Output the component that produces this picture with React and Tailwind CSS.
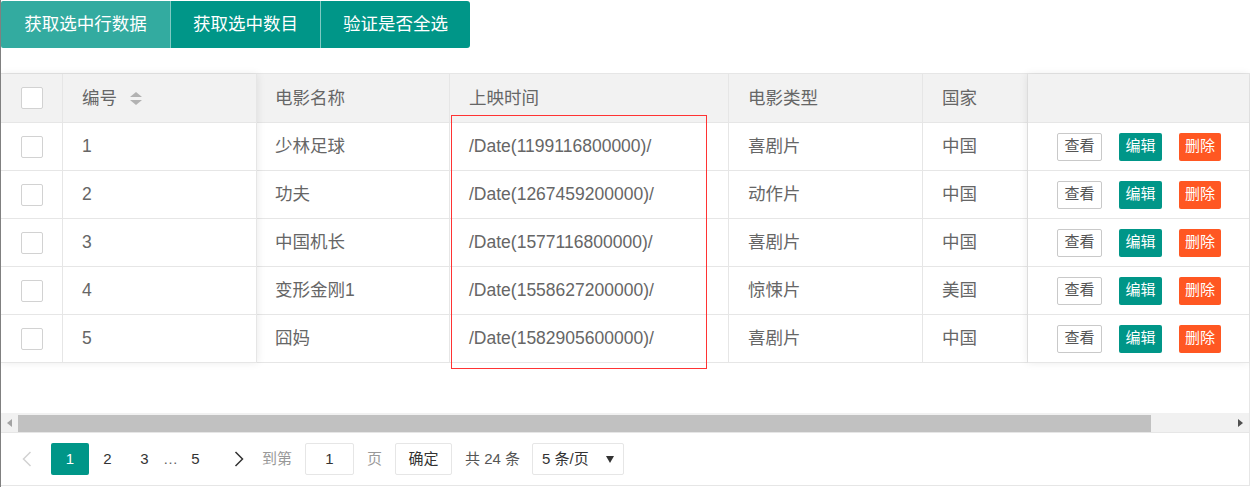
const ROWS = [
  ['1', '少林足球', '/Date(1199116800000)/', '喜剧片', '中国'],
  ['2', '功夫', '/Date(1267459200000)/', '动作片', '中国'],
  ['3', '中国机长', '/Date(1577116800000)/', '喜剧片', '中国'],
  ['4', '变形金刚1', '/Date(1558627200000)/', '惊悚片', '美国'],
  ['5', '囧妈', '/Date(1582905600000)/', '喜剧片', '中国'],
];

const Checkbox = () => (
  <span className="block w-[22px] h-[22px] border border-[#d2d2d2] rounded-[2px] bg-white" />
);

const SortIcon = () => (
  <svg width="12" height="13" viewBox="0 0 12 13" className="ml-[13px]">
    <polygon points="6,0 12,5 0,5" fill="#b2b2b2" />
    <polygon points="0,8 12,8 6,13" fill="#b2b2b2" />
  </svg>
);

const Chevron = ({ dir, color }) => (
  <svg width="10" height="16" viewBox="0 0 10 16">
    <polyline
      points={dir === 'left' ? '8.5,1 1.5,8 8.5,15' : '1.5,1 8.5,8 1.5,15'}
      fill="none"
      stroke={color}
      strokeWidth="1.5"
    />
  </svg>
);

export default function App() {
  return (
    <div className="relative w-[1250px] h-[487px] bg-white border-l border-[#808080] overflow-hidden text-[#666] font-['Liberation_Sans','Noto_Sans_CJK_SC',sans-serif]">
      {/* ── Toolbar ── */}
      <div className="pt-px flex h-[48px] text-[17.5px] text-white">
        <button className="w-[169px] h-[47px] bg-[#33aba0] rounded-l-[2px]">获取选中行数据</button>
        <button className="w-[150px] h-[47px] bg-[#009688] border-l border-[#7fcac3]">获取选中数目</button>
        <button className="w-[150px] h-[47px] bg-[#009688] border-l border-[#7fcac3] rounded-r-[3px]">验证是否全选</button>
      </div>

      {/* ── Table ── */}
      <div className="mt-[25px] border-t border-b border-r border-[#e6e6e6]">
        <div className="h-[339px] flex text-[17.5px]">
          {/* fixed left */}
          <div className="relative z-10 w-[256px] self-start bg-white shadow-[1px_0_8px_rgba(0,0,0,0.08)]">
            <div className="flex h-[49px] bg-[#f2f2f2] border-b border-[#e6e6e6]">
              <div className="w-[62px] flex items-center justify-center border-r border-[#e6e6e6]">
                <Checkbox />
              </div>
              <div className="w-[194px] flex items-center px-[19px] border-r border-[#e6e6e6]">
                <span>编号</span>
                <SortIcon />
              </div>
            </div>
            {ROWS.map(r => (
              <div key={r[0]} className="flex h-[48px] border-b border-[#e6e6e6]">
                <div className="w-[62px] flex items-center justify-center border-r border-[#e6e6e6]">
                  <Checkbox />
                </div>
                <div className="w-[194px] flex items-center px-[19px] border-r border-[#e6e6e6]">{r[0]}</div>
              </div>
            ))}
          </div>

          {/* scrolling middle */}
          <div className="w-[771px] self-start">
            <div className="flex h-[49px] bg-[#f2f2f2] border-b border-[#e6e6e6]">
              <div className="w-[193px] flex items-center px-[18px] border-r border-[#e6e6e6]">电影名称</div>
              <div className="w-[279px] flex items-center px-[19px] border-r border-[#e6e6e6]">上映时间</div>
              <div className="w-[194px] flex items-center px-[19px] border-r border-[#e6e6e6]">电影类型</div>
              <div className="w-[105px] flex items-center px-[19px] border-r border-[#e6e6e6]">国家</div>
            </div>
            {ROWS.map(r => (
              <div key={r[0]} className="flex h-[48px] border-b border-[#e6e6e6]">
                <div className="w-[193px] flex items-center px-[18px] border-r border-[#e6e6e6]">{r[1]}</div>
                <div className="w-[279px] flex items-center px-[19px] border-r border-[#e6e6e6]">{r[2]}</div>
                <div className="w-[194px] flex items-center px-[19px] border-r border-[#e6e6e6]">{r[3]}</div>
                <div className="w-[105px] flex items-center px-[19px] border-r border-[#e6e6e6]">{r[4]}</div>
              </div>
            ))}
          </div>

          {/* fixed right */}
          <div className="relative z-10 flex-1 self-start bg-white shadow-[-1px_0_8px_rgba(0,0,0,0.08)]">
            <div className="h-[49px] bg-[#f2f2f2] border-b border-[#e6e6e6]" />
            {ROWS.map(r => (
              <div key={r[0]} className="flex items-center h-[48px] pl-[29px] gap-[17px] border-b border-[#e6e6e6] text-[15px]">
                <span className="h-[28px] w-[45px] flex items-center justify-center border border-[#c9c9c9] rounded-[2px] text-[#555] bg-white">查看</span>
                <span className="h-[28px] w-[43px] flex items-center justify-center rounded-[2px] text-white bg-[#009688]">编辑</span>
                <span className="h-[28px] w-[42px] flex items-center justify-center rounded-[2px] text-white bg-[#ff5722]">删除</span>
              </div>
            ))}
          </div>
        </div>

        {/* horizontal scrollbar */}
        <div className="flex h-[19px] bg-[#f1f1f1]">
          <div className="w-[17px] flex items-center justify-center">
            <svg width="5" height="8" viewBox="0 0 5 8"><polygon points="5,0 5,8 0,4" fill="#a3a3a3" /></svg>
          </div>
          <div className="w-[1133px] mt-[2px] h-[17px] bg-[#c1c1c1]" />
          <div className="flex-1" />
          <div className="w-[17px] flex items-center justify-center">
            <svg width="5" height="8" viewBox="0 0 5 8"><polygon points="0,0 5,4 0,8" fill="#505050" /></svg>
          </div>
        </div>

        {/* pagination */}
        <div className="h-[53px] border-t border-[#e6e6e6] flex items-center pl-[21px] text-[15px] text-[#333]">
          <Chevron dir="left" color="#d2d2d2" />
          <span className="ml-[19px] w-[38px] h-[32px] flex items-center justify-center rounded-[2px] bg-[#009688] text-white">1</span>
          <span className="w-[37px] text-center">2</span>
          <span className="w-[37px] text-center">3</span>
          <span className="w-[14px] text-center text-[#666]">…</span>
          <span className="w-[37px] text-center">5</span>
          <span className="ml-[20px]"><Chevron dir="right" color="#333" /></span>
          <span className="ml-[18px] text-[#999]">到第</span>
          <span className="ml-[13px] w-[49px] h-[32px] flex items-center justify-center border border-[#e6e6e6] rounded-[2px]">1</span>
          <span className="ml-[13px] text-[#999]">页</span>
          <span className="ml-[13px] w-[57px] h-[32px] flex items-center justify-center border border-[#e6e6e6] rounded-[2px]">确定</span>
          <span className="ml-[13px] text-[#555]">共 24 条</span>
          <span className="ml-[12px] w-[92px] h-[32px] flex items-center justify-between pl-[9px] pr-[9px] border border-[#e6e6e6] rounded-[2px]">
            <span>5 条/页</span>
            <svg width="8" height="8" viewBox="0 0 8 8"><polygon points="0,1 8,1 4,8" fill="#333" /></svg>
          </span>
        </div>
      </div>

      {/* highlight around the date column */}
      <div className="absolute left-[450px] top-[115px] w-[256px] h-[254px] border border-[#ff3333] pointer-events-none z-20" />
    </div>
  );
}
